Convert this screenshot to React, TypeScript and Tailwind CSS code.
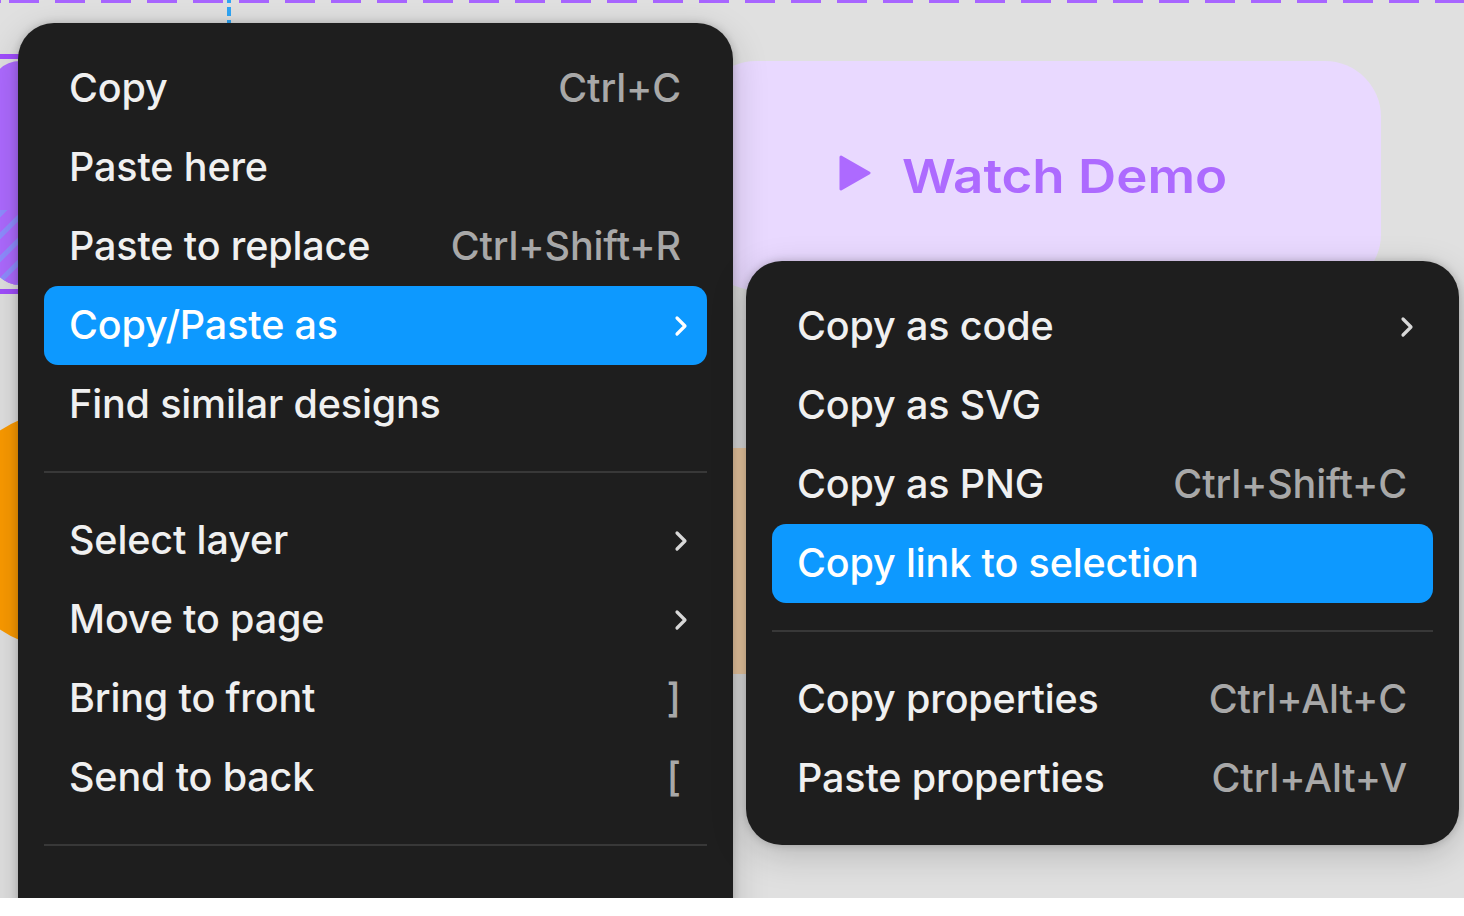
import React from 'react';
import { ChevronRight } from 'lucide-react';

type Row = {
  label: string;
  shortcut?: string;
  arrow?: boolean;
  active?: boolean;
};

const mainTop: Row[] = [
  { label: 'Copy', shortcut: 'Ctrl+C' },
  { label: 'Paste here' },
  { label: 'Paste to replace', shortcut: 'Ctrl+Shift+R' },
  { label: 'Copy/Paste as', arrow: true, active: true },
  { label: 'Find similar designs' },
];

const mainBottom: Row[] = [
  { label: 'Select layer', arrow: true },
  { label: 'Move to page', arrow: true },
  { label: 'Bring to front', shortcut: ']' },
  { label: 'Send to back', shortcut: '[' },
];

const subTop: Row[] = [
  { label: 'Copy as code', arrow: true },
  { label: 'Copy as SVG' },
  { label: 'Copy as PNG', shortcut: 'Ctrl+Shift+C' },
  { label: 'Copy link to selection', active: true },
];

const subBottom: Row[] = [
  { label: 'Copy properties', shortcut: 'Ctrl+Alt+C' },
  { label: 'Paste properties', shortcut: 'Ctrl+Alt+V' },
];

function MenuRow({ row }: { row: Row }) {
  return (
    <div
      className={
        row.active
          ? 'flex h-[79px] items-center justify-between rounded-[14px] bg-[#0d99ff] pl-[25px] pr-[26px] text-white'
          : 'flex h-[79px] items-center justify-between rounded-[14px] pl-[25px] pr-[26px] text-[#f0f0f0]'
      }
    >
      <span>{row.label}</span>
      {row.shortcut && <span className="text-[#a8a8a8]">{row.shortcut}</span>}
      {row.arrow && (
        <ChevronRight
          className={row.active ? 'mr-[-16px] h-8 w-8 text-white' : 'mr-[-16px] h-8 w-8 text-[#d8d8d8]'}
          strokeWidth={2.4}
        />
      )}
    </div>
  );
}

function Separator() {
  return (
    <div className="flex h-[57px] items-center">
      <div className="mt-[-1px] h-[2px] w-full bg-[#383838]" />
    </div>
  );
}

export default function App() {
  return (
    <div className="min-h-[916px] bg-white">
      <div className="relative h-[898px] w-[1464px] overflow-hidden bg-[#e0e0e0] font-['Inter',sans-serif] text-[39.5px] font-medium leading-none tracking-[-0.15px]">
        {/* dashed frame edge along the top */}
        <div className="absolute left-0 top-0 h-[3px] w-full bg-[repeating-linear-gradient(90deg,#a865ff_0px,#a865ff_30px,transparent_30px,transparent_46px)] bg-[position:9px_0]" />
        <div className="absolute left-[227px] top-0 h-[24px] w-[4px] bg-[repeating-linear-gradient(180deg,#2fa5f5_0px,#2fa5f5_3px,transparent_3px,transparent_7px,#2fa5f5_7px,#2fa5f5_13px)]" />

        {/* canvas content behind the menus */}
        <div className="absolute left-0 top-[54px] h-[5px] w-[20px] bg-[#a04dfd]" />
        <div className="absolute left-0 top-[289px] h-[5px] w-[20px] bg-[#a04dfd]" />
        <div className="absolute left-[-10px] top-[61px] h-[224px] w-[60px] overflow-hidden rounded-[40px] bg-[#ad6aff]">
          <div className="absolute bottom-0 left-[10px] h-[75px] w-[30px] bg-[repeating-linear-gradient(135deg,#8f8cff_0px,#8f8cff_5px,#ad6aff_5px,#ad6aff_16px)]" />
        </div>
        <div className="absolute left-[-53px] top-[410px] h-[240px] w-[240px] rounded-full bg-[#fb9a00]" />
        <div className="absolute left-[700px] top-[61px] flex h-[229px] w-[681px] items-start rounded-[56px] bg-[#e9d9ff] pl-[139px] pt-[85px]">
          <div className="flex items-center gap-[31px]">
            <svg viewBox="0 0 32 36" className="h-[36px] w-[32px]" aria-hidden="true">
              <path d="M2 2 L30 18 L2 34 Z" fill="#ad6aff" stroke="#ad6aff" strokeWidth="3" strokeLinejoin="round" />
            </svg>
            <span className="mt-[6px] origin-left scale-x-[1.125] text-[47px] font-semibold tracking-normal text-[#ad6aff]">
              Watch Demo
            </span>
          </div>
        </div>
        <div className="absolute left-[720px] top-[448px] h-[226px] w-[40px] bg-[#f0cda5]" />

        {/* main context menu */}
        <div className="absolute left-[18px] top-[23px] w-[715px] rounded-[36px] bg-[#1e1e1e] p-[26px] shadow-[0_10px_36px_rgba(0,0,0,0.18),0_0_8px_rgba(0,0,0,0.2)]">
          {mainTop.map((row) => (
            <MenuRow key={row.label} row={row} />
          ))}
          <Separator />
          {mainBottom.map((row) => (
            <MenuRow key={row.label} row={row} />
          ))}
          <Separator />
          <MenuRow row={{ label: 'Frame', shortcut: 'Ctrl+Alt+G' }} />
        </div>

        {/* copy/paste submenu */}
        <div className="absolute left-[746px] top-[261px] w-[713px] rounded-[36px] bg-[#1e1e1e] p-[26px] pb-[27px] shadow-[0_10px_36px_rgba(0,0,0,0.18),0_0_8px_rgba(0,0,0,0.2)]">
          {subTop.map((row) => (
            <MenuRow key={row.label} row={row} />
          ))}
          <Separator />
          {subBottom.map((row) => (
            <MenuRow key={row.label} row={row} />
          ))}
        </div>
      </div>
    </div>
  );
}
